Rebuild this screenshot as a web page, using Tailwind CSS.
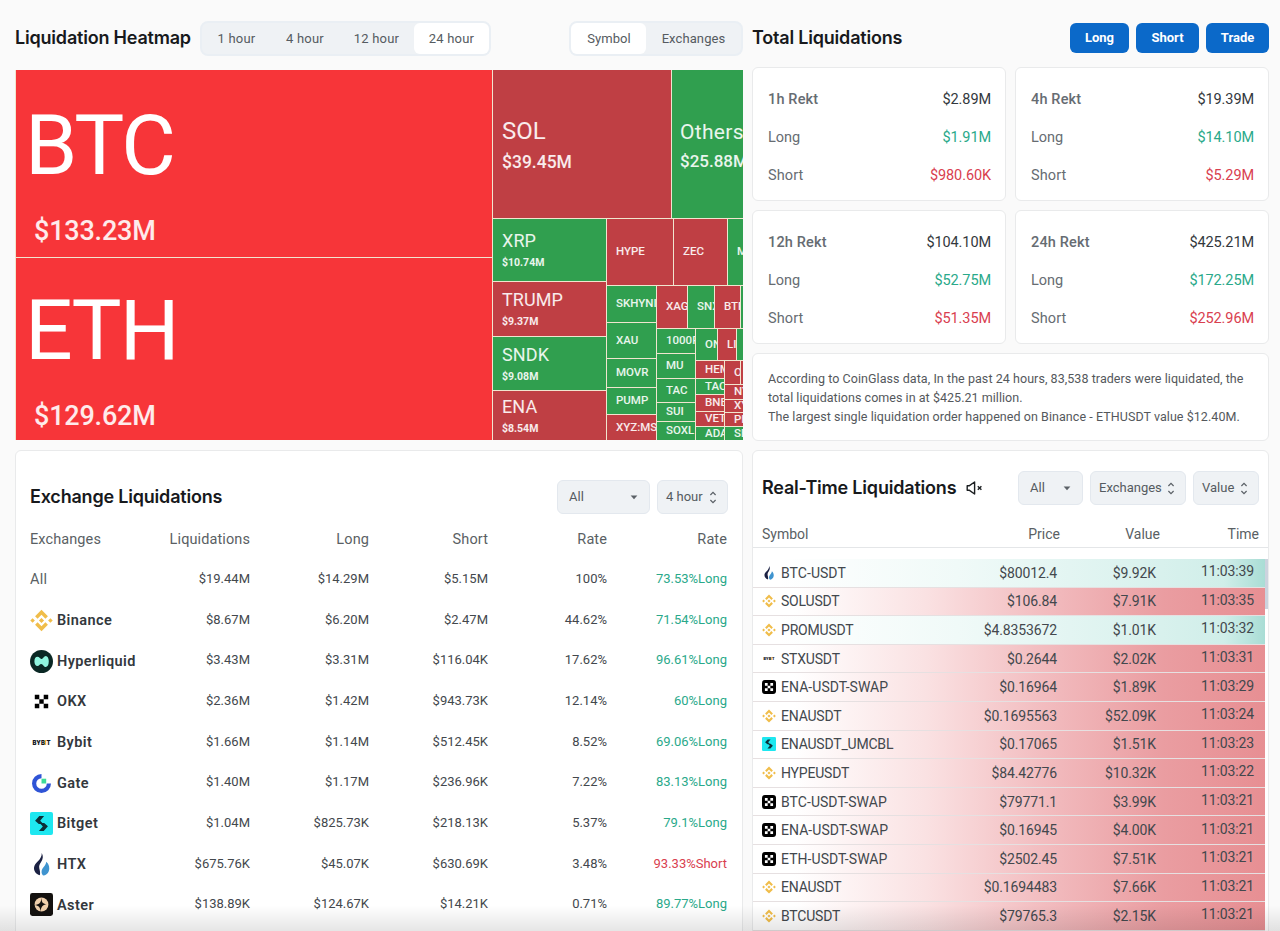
<!DOCTYPE html>
<html lang="en">
<head>
  <meta charset="UTF-8">
  <meta name="viewport" content="width=device-width, initial-scale=1.0">
  <title>Liquidation Heatmap</title>
  <script src="https://cdn.jsdelivr.net/npm/@tailwindcss/browser@4"></script>
</head>
<body class="relative h-[931px] w-[1280px] overflow-hidden bg-[#fafafa] font-['Roboto',sans-serif] text-[#43484d]">

  <!-- Icons -->
  <svg class="hidden">
    <symbol id="binance" viewBox="0 0 24 24"><path fill="#f0bd4a" d="M12 .8l6.700 6.700-2.600 2.600L12 6l-4.100 4.100-2.600-2.600zM12 23.200l-6.700-6.700 2.600-2.600L12 18l4.100-4.100 2.600 2.600zM2.700 9.600L5.100 12l-2.400 2.400L.3 12zM21.300 9.600l2.400 2.400-2.400 2.400-2.400-2.400zM12 9.300l2.700 2.700-2.700 2.700L9.300 12z"/></symbol>
    <symbol id="hyperliquid" viewBox="0 0 24 24"><circle cx="12" cy="12" r="12" fill="#0a2824"/><path fill="#8ff5df" d="M19.600 11.800c0 3.800-1.300 5.900-3.200 5.900-2.200 0-2.700-3.200-4.700-3.200-1.700 0-2.100 2.300-3.900 2.300-1.900 0-3.200-2.100-3.200-4.800 0-2.800 1.100-4.900 3.100-4.900 2.100 0 2.600 2.300 4.200 2.300 1.900 0 2.500-3.200 4.600-3.200 1.800 0 3.100 2.400 3.100 5.600z"/></symbol>
    <symbol id="okx" viewBox="0 0 24 24"><path fill="#000" d="M5 5h4.700v4.700H5zM14.300 5H19v4.700h-4.700zM9.700 9.700h4.600v4.600H9.700zM5 14.300h4.700V19H5zM14.300 14.300H19V19h-4.700z"/></symbol>
    <symbol id="okx-dark" viewBox="0 0 24 24"><rect width="24" height="24" rx="5" fill="#000"/><path fill="#fff" d="M5 5h4.700v4.700H5zM14.300 5H19v4.700h-4.700zM9.700 9.700h4.600v4.600H9.700zM5 14.300h4.700V19H5zM14.300 14.300H19V19h-4.700z"/></symbol>
    <symbol id="bybit" viewBox="0 0 24 24"><text x="2.500" y="14.200" font-family="Inter, sans-serif" font-size="6.200" font-weight="900" fill="#17181e" textLength="19" lengthAdjust="spacingAndGlyphs">BYB<tspan fill="#f7a600">I</tspan>T</text></symbol>
    <symbol id="gate" viewBox="0 0 24 24"><path d="M12 4.300a7.700 7.700 0 1 0 7.700 7.700" fill="none" stroke="#2f54d6" stroke-width="4.400"/><path fill="#3ddc98" d="M12 7h4.900v5H12z"/></symbol>
    <symbol id="bitget" viewBox="0 0 24 24"><rect width="24" height="24" rx="2" fill="#1ee7f0"/><path fill="#0c3039" d="M9.700 4.300h5L10.600 9l3.400 3.600h-4.800L5.300 9.100zM14.300 19.700h-5l4.100-4.500L10 11.400h4.800l3.900 3.500z"/></symbol>
    <symbol id="htx" viewBox="0 0 24 24"><path fill="#1b2143" d="M12.300 0c1.800 3.500 1.200 6.300-.6 9-1.700 2.500-2.500 4.300-2 6.900.4 2.300 1.300 4 .6 7.400C6 21.800 3.900 18.500 4.200 15 4.700 10 12.500 7.500 12.300 0z"/><path fill="#3f94cf" d="M17 9c3 2.600 3.900 6.800 2.600 10-1 2.500-3.200 4.300-6 4.600-1.900-2.300-2.100-5-.5-7.500 1.500-2.300 3.600-3.800 3.900-7.100z"/></symbol>
    <symbol id="aster" viewBox="0 0 24 24"><rect width="24" height="24" rx="2.500" fill="#14110f"/><circle cx="12" cy="12" r="7.200" fill="#f1d0ac"/><path fill="#14110f" d="M12 4.800c.2 4.900.8 6.500 5.200 7-4 .7-5.500 2.500-6.200 7.400-.4-4.600-1.700-5.900-6.100-6.700 5.100-.5 6.700-2.300 7.100-7.700z"/></symbol>
    <symbol id="caret" viewBox="0 0 10 6"><path fill="#5b6167" d="M.8.600h8.400L5 5.200z"/></symbol>
    <symbol id="sort" viewBox="0 0 8 14"><path d="M1.200 4.300L4 1.500l2.800 2.800M1.200 9.700L4 12.500l2.800-2.800" fill="none" stroke="#5b6167" stroke-width="1.300"/></symbol>
    <symbol id="mute" viewBox="0 0 18 14"><path d="M1.200 4.800h1.900L8.600 1v12L3.100 9.200H1.200z" fill="none" stroke="#1b1e21" stroke-width="1.400" stroke-linejoin="round"/><path d="M11.800 5.200l3.600 3.600M15.400 5.200l-3.600 3.600" stroke="#1b1e21" stroke-width="1.400"/></symbol>
  </svg>

  <div class="flex gap-[9px] pl-[15px]">

    <!-- Left column -->
    <div class="w-[728px] shrink-0">
      <div class="flex h-[70px] items-center pt-[6px]">
        <h2 class="w-[185px] whitespace-nowrap font-['Inter'] text-lg font-semibold tracking-[-0.2px] text-[#17191c]">Liquidation Heatmap</h2>
        <div class="flex h-[35px] w-[291px] rounded-lg border-2 border-[#eaeff4] bg-[#eff2f5] text-[13px] leading-[31px] tracking-[0.2px] text-[#555b61]">
          <span class="w-[69px] text-center">1 hour</span>
          <span class="w-[68px] text-center">4 hour</span>
          <span class="w-[75px] text-center">12 hour</span>
          <span class="flex-1 rounded-md bg-white text-center">24 hour</span>
        </div>
        <div class="ml-auto flex h-[35px] w-[174px] rounded-lg border-2 border-[#eaeff4] bg-[#eff2f5] text-[13px] leading-[31px] tracking-[0.1px] text-[#555b61]">
          <span class="w-[75px] rounded-md bg-white pl-px text-center">Symbol</span>
          <span class="flex-1 text-center">Exchanges</span>
        </div>
      </div>

      <!-- Treemap -->
      <div id="treemap" class="flex h-[370px] overflow-hidden bg-[#f1e5cf] pl-px text-white/90"></div>

      <!-- Exchange liquidations -->
      <section class="mt-[10px] h-[500px] rounded-md border border-[#e9eaeb] bg-white px-[14px] pt-[29px]">
        <div class="flex h-[34px] items-center text-[13px] text-[#555b61]">
          <h2 class="mr-auto font-['Inter'] text-lg font-semibold tracking-[-0.2px] text-[#17191c]">Exchange Liquidations</h2>
          <div class="mr-[7px] flex h-[34px] w-[93px] items-center justify-between rounded-md border border-[#e3e8ee] bg-[#eff2f5] pr-[11px] pl-[11px]">All<svg class="h-[5px] w-[8px]"><use href="#caret"/></svg></div>
          <div class="flex h-[34px] w-[71px] items-center justify-between rounded-md border border-[#e3e8ee] bg-[#eff2f5] pr-[10px] pl-[8px]">4 hour<svg class="h-[13px] w-[8px]"><use href="#sort"/></svg></div>
        </div>
        <div class="mt-[5px] grid h-[40px] grid-cols-[107px_113px_119px_119px_119px_120px] items-center pt-[2px] text-right text-[14.5px] tracking-[0.1px] text-[#5a5f64]">
          <span class="text-left">Exchanges</span><span>Liquidations</span><span>Long</span><span>Short</span><span>Rate</span><span>Rate</span>
        </div>
        <div id="exchanges"></div>
      </section>
    </div>

    <!-- Right column -->
    <div class="w-[517px] shrink-0">
      <div class="flex h-[67px] items-center gap-[7px] pt-[8px] text-[13px] font-bold text-white">
        <h2 class="mr-auto font-['Inter'] text-lg font-semibold tracking-[-0.2px] text-[#17191c]">Total Liquidations</h2>
        <button class="h-[30px] w-[59px] rounded-md bg-[#0b69c9]">Long</button>
        <button class="h-[30px] w-[63px] rounded-md bg-[#0b69c9]">Short</button>
        <button class="h-[30px] w-[63px] rounded-md bg-[#0b69c9]">Trade</button>
      </div>

      <div id="totals" class="grid grid-cols-2 gap-[9px]"></div>

      <div class="mt-[9px] h-[88px] rounded-md border border-[#e9eaeb] bg-white pt-[15px] pl-[15px] text-[12.5px] leading-[19px] whitespace-nowrap text-[#54585c]">
        <p class="tracking-[0.06px]">According to CoinGlass data, In the past 24 hours, 83,538 traders were liquidated, the</p>
        <p class="tracking-[0.04px]">total liquidations comes in at $425.21 million.</p>
        <p class="tracking-[0.06px]">The largest single liquidation order happened on Binance - ETHUSDT value $12.40M.</p>
      </div>

      <!-- Real-time liquidations -->
      <section class="mt-[9px] h-[500px] rounded-md border border-[#e9eaeb] bg-white pt-[20px]">
        <div class="flex h-[34px] items-center gap-[7px] pr-[9px] pl-[9px] text-[13px] text-[#555b61]">
          <h2 class="font-['Inter'] text-lg font-semibold tracking-[-0.2px] whitespace-nowrap text-[#17191c]">Real-Time Liquidations</h2>
          <svg class="mr-auto ml-[3px] h-[14px] w-[18px]"><use href="#mute"/></svg>
          <div class="flex h-[34px] w-[65px] items-center justify-between rounded-md border border-[#e3e8ee] bg-[#eff2f5] px-[11px]">All<svg class="h-[5px] w-[8px]"><use href="#caret"/></svg></div>
          <div class="flex h-[34px] w-[96px] items-center justify-between rounded-md border border-[#e3e8ee] bg-[#eff2f5] pr-[10px] pl-[8px]">Exchanges<svg class="h-[13px] w-[8px]"><use href="#sort"/></svg></div>
          <div class="flex h-[34px] w-[66px] items-center justify-between rounded-md border border-[#e3e8ee] bg-[#eff2f5] pr-[10px] pl-[8px]">Value<svg class="h-[13px] w-[8px]"><use href="#sort"/></svg></div>
        </div>
        <div class="grid h-[43px] grid-cols-[180px_118px_100px_99px] items-center border-b border-[#e4e6e8] pt-[16px] pl-[9px] text-right text-sm text-[#5a5f64]">
          <span class="text-left">Symbol</span><span>Price</span><span>Value</span><span>Time</span>
        </div>
        <div class="flex pt-[11px]">
          <div id="orders" class="w-[512px]"></div>
          <div class="h-[50px] w-[3px] bg-[#ccd3de]"></div>
        </div>
      </section>
    </div>
  </div>

  <div class="absolute inset-x-0 bottom-0 h-[26px] bg-gradient-to-b from-black/0 to-black/10"></div>

  <script>
    // w / h are inner sizes in px, the last child of a group runs past the clipped edge
    const B = "bg-[#f73539]", R = "bg-[#bf3f44]", G = "bg-[#309f4f]";
    const cell = (color, w, h, html) =>
      `<div class="${color} flex shrink-0 flex-col justify-center overflow-hidden whitespace-nowrap leading-none" style="width:${w}px;height:${h}px">${html}</div>`;
    const big = (w, h, name, val) => cell(B, w, h,
      `<div class="mt-[21px] pl-[9px] text-[84px] leading-[84px] tracking-[-2px] text-white">${name}</div><div class="mt-[30px] pl-[18px] text-[27px] font-medium tracking-[-0.2px]">${val}</div>`);
    const mid = (color, w, h, name, val) => cell(color, w, h,
      `<div class="pt-px pl-[9px] text-[18px] tracking-[0.1px]">${name}</div><div class="mt-[8px] pl-[9px] text-[10.5px] font-bold">${val}</div>`);
    const tiny = (color, w, h, name) => cell(color, w, h, `<div class="pl-[9px] text-[11.5px] font-medium">${name}</div>`);
    const row = (...c) => `<div class="flex gap-px">${c.join("")}</div>`;
    const col = (...c) => `<div class="flex flex-col gap-px">${c.join("")}</div>`;

    document.getElementById("treemap").innerHTML = row(
      col(big(476, 187, "BTC", "$133.23M"), big(476, 182, "ETH", "$129.62M")),
      col(
        row(
          cell(R, 178, 148, `<div class="mt-[2px] pl-[9px] text-[24px]">SOL</div><div class="mt-[11px] pl-[9px] text-[17.5px] font-medium">$39.45M</div>`),
          cell(G, 90, 148, `<div class="mt-[3px] pl-[8px] text-[21px] tracking-[0.3px]">Others</div><div class="mt-[10px] pl-[8px] text-[17px] font-medium">$25.88M</div>`)
        ),
        row(
          col(mid(G, 113, 62, "XRP", "$10.74M"), mid(R, 113, 54, "TRUMP", "$9.37M"), mid(G, 113, 53, "SNDK", "$9.08M"), mid(R, 113, 49, "ENA", "$8.54M")),
          col(
            row(tiny(R, 66, 66, "HYPE"), tiny(R, 53, 66, "ZEC"), tiny(G, 40, 66, "MSTR")),
            row(
              col(tiny(G, 49, 36, "SKHYNIX"), tiny(G, 49, 35, "XAU"), tiny(G, 49, 28, "MOVR"), tiny(G, 49, 26, "PUMP"), tiny(R, 49, 25, "XYZ:MSTR")),
              col(
                row(tiny(R, 30, 42, "XAG"), tiny(G, 26, 42, "SNX"), tiny(R, 25, 42, "BTR"), tiny(G, 20, 42, "")),
                row(
                  col(tiny(G, 38, 24, "1000PEPE"), tiny(G, 38, 24, "MU"), tiny(G, 38, 23, "TAC"), tiny(G, 38, 18, "SUI"), tiny(G, 38, 18, "SOXL")),
                  col(
                    row(tiny(G, 21, 31, "ONDO"), tiny(R, 18, 31, "LIT"), tiny(G, 20, 31, "")),
                    row(
                      col(tiny(R, 28, 17, "HEMI"), tiny(G, 28, 15, "TAO"), tiny(R, 28, 16, "BNB"), tiny(R, 28, 14, "VET"), tiny(G, 28, 13, "ADA")),
                      col(row(tiny(R, 15, 23, "ORDI"), tiny(R, 20, 23, "")), tiny(R, 28, 14, "NY"), tiny(R, 28, 12, "XYZ"), tiny(R, 28, 13, "PIPPIN"), tiny(G, 28, 13, "SEI"))
                    )
                  )
                )
              )
            )
          )
        )
      )
    );

    const exchanges = [
      ["", "All", "$19.44M", "$14.29M", "$5.15M", "100%", "73.53%Long"],
      ["binance", "Binance", "$8.67M", "$6.20M", "$2.47M", "44.62%", "71.54%Long"],
      ["hyperliquid", "Hyperliquid", "$3.43M", "$3.31M", "$116.04K", "17.62%", "96.61%Long"],
      ["okx", "OKX", "$2.36M", "$1.42M", "$943.73K", "12.14%", "60%Long"],
      ["bybit", "Bybit", "$1.66M", "$1.14M", "$512.45K", "8.52%", "69.06%Long"],
      ["gate", "Gate", "$1.40M", "$1.17M", "$236.96K", "7.22%", "83.13%Long"],
      ["bitget", "Bitget", "$1.04M", "$825.73K", "$218.13K", "5.37%", "79.1%Long"],
      ["htx", "HTX", "$675.76K", "$45.07K", "$630.69K", "3.48%", "93.33%Short"],
      ["aster", "Aster", "$138.89K", "$124.67K", "$14.21K", "0.71%", "89.77%Long"]
    ];
    document.getElementById("exchanges").innerHTML = exchanges.map(([icon, name, ...v]) => `
      <div class="grid h-[40.65px] grid-cols-[107px_113px_119px_119px_119px_120px] items-center text-right text-[13px] text-[#43484d]">
        <div class="flex items-center gap-[4px] pt-px text-left text-[14.5px]">
          ${icon ? `<svg class="h-[23px] w-[23px] shrink-0"><use href="#${icon}"/></svg><span class="pt-px font-semibold tracking-[0.4px] text-[#33383d]">${name}</span>` : `<span class="pt-px tracking-[0.2px] text-[#5a5f64]">${name}</span>`}
        </div>
        ${v.slice(0, 4).map(t => `<span class="pb-px">${t}</span>`).join("")}
        <span class="pb-px ${v[4].endsWith("Long") ? "text-[#2aa98a]" : "text-[#d9404f]"}">${v[4]}</span>
      </div>`).join("");

    const totals = [
      ["1h", "$2.89M", "$1.91M", "$980.60K"],
      ["4h", "$19.39M", "$14.10M", "$5.29M"],
      ["12h", "$104.10M", "$52.75M", "$51.35M"],
      ["24h", "$425.21M", "$172.25M", "$252.96M"]
    ];
    document.getElementById("totals").innerHTML = totals.map(([t, all, long, short]) => `
      <div class="flex h-[134px] flex-col rounded-md border border-[#e9eaeb] bg-white pt-[13px] pr-[14px] pl-[15px] text-[14.5px] leading-[38px] text-[#666c72]">
        <div class="flex justify-between"><span class="font-medium tracking-[0.15px]">${t} Rekt</span><span class="tracking-[-0.1px] text-[#33383d]">${all}</span></div>
        <div class="flex justify-between"><span>Long</span><span class="tracking-[-0.1px] text-[#2aa98a]">${long}</span></div>
        <div class="flex justify-between"><span class="tracking-[0.1px]">Short</span><span class="tracking-[-0.1px] text-[#d9404f]">${short}</span></div>
      </div>`).join("");

    const orders = [
      ["htx", "BTC-USDT", "$80012.4", "$9.92K", "11:03:39", 1],
      ["binance", "SOLUSDT", "$106.84", "$7.91K", "11:03:35"],
      ["binance", "PROMUSDT", "$4.8353672", "$1.01K", "11:03:32", 1],
      ["bybit", "STXUSDT", "$0.2644", "$2.02K", "11:03:31"],
      ["okx-dark", "ENA-USDT-SWAP", "$0.16964", "$1.89K", "11:03:29"],
      ["binance", "ENAUSDT", "$0.1695563", "$52.09K", "11:03:24"],
      ["bitget", "ENAUSDT_UMCBL", "$0.17065", "$1.51K", "11:03:23"],
      ["binance", "HYPEUSDT", "$84.42776", "$10.32K", "11:03:22"],
      ["okx-dark", "BTC-USDT-SWAP", "$79771.1", "$3.99K", "11:03:21"],
      ["okx-dark", "ENA-USDT-SWAP", "$0.16945", "$4.00K", "11:03:21"],
      ["okx-dark", "ETH-USDT-SWAP", "$2502.45", "$7.51K", "11:03:21"],
      ["binance", "ENAUSDT", "$0.1694483", "$7.66K", "11:03:21"],
      ["binance", "BTCUSDT", "$79765.3", "$2.15K", "11:03:21"]
    ];
    document.getElementById("orders").innerHTML = orders.map(([icon, sym, price, value, time, long]) => `
      <div class="${long ? "bg-[linear-gradient(90deg,#fff_5%,#f0faf8_40%,#d8f1ed_80%,#d0eee9_92%,#a9ddd5)]" : "bg-[linear-gradient(90deg,#fff_8%,#fae1e2_34%,#f2bcbf_57%,#ea9da1_80%,#e78f93)]"} grid h-[28.6px] grid-cols-[180px_115px_99px_98px] items-center border-b border-[#e6e0e1] pl-[9px] text-right text-sm tracking-[-0.12px]">
        <div class="flex items-center gap-[5px] text-left"><svg class="h-[14px] w-[14px] shrink-0"><use href="#${icon}"/></svg><span class="whitespace-nowrap ${sym.includes("-") ? "tracking-[0.05px]" : "tracking-[-0.2px]"}">${sym}</span></div>
        <span>${price}</span><span>${value}</span><span class="pb-[3px]">${time}</span>
      </div>`).join("");
  </script>
</body>
</html>
